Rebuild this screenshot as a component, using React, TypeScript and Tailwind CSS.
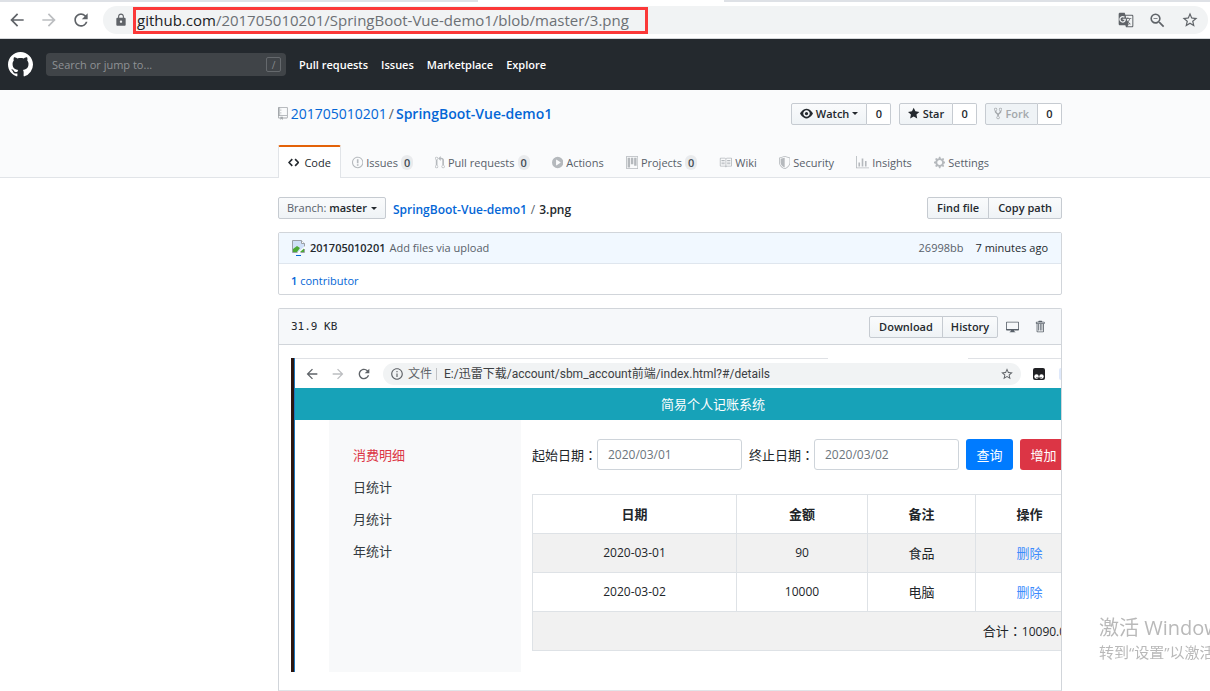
import type { ReactNode } from "react";
import {
  MdArrowBack,
  MdArrowForward,
  MdGTranslate,
  MdInfoOutline,
  MdLock,
  MdRefresh,
  MdStarBorder,
  MdZoomOut,
} from "react-icons/md";

// Octicons v1: [viewBox width, path], all 16 units high
const ICONS = {
  mark: [
    16,
    "M8 0C3.58 0 0 3.58 0 8c0 3.54 2.29 6.53 5.47 7.59.4.07.55-.17.55-.38 0-.19-.01-.82-.01-1.49-2.01.37-2.53-.49-2.69-.94-.09-.23-.48-.94-.82-1.13-.28-.15-.68-.52-.01-.53.63-.01 1.08.58 1.23.82.72 1.21 1.87.87 2.33.66.07-.52.28-.87.51-1.07-1.78-.2-3.64-.89-3.64-3.95 0-.87.31-1.59.82-2.15-.08-.2-.36-1.02.08-2.12 0 0 .67-.21 2.2.82.64-.18 1.32-.27 2-.27.68 0 1.36.09 2 .27 1.53-1.04 2.2-.82 2.2-.82.44 1.1.16 1.92.08 2.12.51.56.82 1.27.82 2.15 0 3.07-1.87 3.75-3.65 3.95.29.25.54.73.54 1.48 0 1.07-.01 1.93-.01 2.2 0 .21.15.46.55.38A8.013 8.013 0 0016 8c0-4.42-3.58-8-8-8z",
  ],
  repo: [
    12,
    "M4 9H3V8h1v1zm0-3H3v1h1V6zm0-2H3v1h1V4zm0-2H3v1h1V2zm8-1v12c0 .55-.45 1-1 1H6v2l-1.5-1.5L3 16v-2H1c-.55 0-1-.45-1-1V1c0-.55.45-1 1-1h10c.55 0 1 .45 1 1zm-1 10H1v2h2v-1h3v1h5v-2zm0-10H2v9h9V1z",
  ],
  code: [
    14,
    "M9.5 3L8 4.5 11.5 8 8 11.5 9.5 13 14 8 9.5 3zm-5 0L0 8l4.5 5L6 11.5 2.5 8 6 4.5 4.5 3z",
  ],
  issue: [
    14,
    "M7 2.3c3.14 0 5.7 2.56 5.7 5.7s-2.56 5.7-5.7 5.7A5.71 5.71 0 011.3 8c0-3.14 2.56-5.7 5.7-5.7zM7 1C3.14 1 0 4.14 0 8s3.14 7 7 7 7-3.14 7-7-3.14-7-7-7zm1 3H6v5h2V4zm0 6H6v2h2v-2z",
  ],
  pull: [
    12,
    "M11 11.28V5c-.03-.78-.34-1.47-.94-2.06C9.46 2.35 8.78 2.03 8 2H7V0L4 3l3 3V4h1c.27.02.48.11.69.31.21.2.3.42.31.69v6.28A1.993 1.993 0 0010 15a1.993 1.993 0 001-3.72zm-1 2.92c-.66 0-1.2-.55-1.2-1.2 0-.65.55-1.2 1.2-1.2.65 0 1.2.55 1.2 1.2 0 .65-.55 1.2-1.2 1.2zM4 3c0-1.11-.89-2-2-2a1.993 1.993 0 00-1 3.72v6.56A1.993 1.993 0 002 15a1.993 1.993 0 001-3.72V4.72c.59-.34 1-.98 1-1.72zm-.8 10c0 .66-.55 1.2-1.2 1.2-.65 0-1.2-.55-1.2-1.2 0-.65.55-1.2 1.2-1.2.65 0 1.2.55 1.2 1.2zM2 4.2C1.34 4.2.8 3.65.8 3c0-.65.55-1.2 1.2-1.2.65 0 1.2.55 1.2 1.2 0 .65-.55 1.2-1.2 1.2z",
  ],
  play: [
    14,
    "M14 8A7 7 0 110 8a7 7 0 0114 0zm-8.223 3.482l4.599-3.066a.5.5 0 000-.832L5.777 4.518A.5.5 0 005 4.934v6.132a.5.5 0 00.777.416z",
  ],
  project: [
    15,
    "M10 12h3V2h-3v10zm-4-2h3V2H6v8zm-4 4h3V2H2v12zm-1 1h13V1H1v14zM14 0H1a1 1 0 00-1 1v14a1 1 0 001 1h13a1 1 0 001-1V1a1 1 0 00-1-1z",
  ],
  book: [
    16,
    "M3 5h4v1H3V5zm0 3h4V7H3v1zm0 2h4V9H3v1zm11-5h-4v1h4V5zm0 2h-4v1h4V7zm0 2h-4v1h4V9zm2-6v9c0 .55-.45 1-1 1H9.5l-1 1-1-1H2c-.55 0-1-.45-1-1V3c0-.55.45-1 1-1h5.5l1 1 1-1H15c.55 0 1 .45 1 1zm-8 .5L7.5 3H2v9h6V3.5zm7-.5H9.5l-.5.5V12h6V3z",
  ],
  shield: [
    14,
    "M0 2l7-2 7 2v6.02C14 12.69 8.69 16 7 16c-1.69 0-7-3.31-7-7.98V2zm1 .75L7 1l6 1.75v5.268C13 12.104 8.449 15 7 15c-1.449 0-6-2.896-6-6.982V2.75zm1 .75L7 2v12c-1.207 0-5-2.482-5-5.985V3.5z",
  ],
  graph: [16, "M16 14v1H0V0h1v14h15zM5 13H3V8h2v5zm4 0H7V3h2v10zm4 0h-2V6h2v7z"],
  gear: [
    14,
    "M14 8.77v-1.6l-1.94-.64-.45-1.09.88-1.84-1.13-1.13-1.81.91-1.09-.45-.69-1.92h-1.6l-.63 1.94-1.11.45-1.84-.88-1.13 1.13.91 1.81-.45 1.09L0 7.23v1.59l1.94.64.45 1.09-.88 1.84 1.13 1.13 1.81-.91 1.09.45.69 1.92h1.59l.63-1.94 1.11-.45 1.84.88 1.13-1.13-.92-1.81.47-1.09L14 8.75v.02zM7 11c-1.66 0-3-1.34-3-3s1.34-3 3-3 3 1.34 3 3-1.34 3-3 3z",
  ],
  eye: [
    16,
    "M8.06 2C3 2 0 8 0 8s3 6 8.06 6C13 14 16 8 16 8s-3-6-7.94-6zM8 12c-2.2 0-4-1.78-4-4 0-2.2 1.8-4 4-4 2.22 0 4 1.8 4 4 0 2.22-1.78 4-4 4zm2-4c0 1.11-.89 2-2 2-1.11 0-2-.89-2-2 0-1.11.89-2 2-2 1.11 0 2 .89 2 2z",
  ],
  star: [14, "M14 6l-4.9-.64L7 1 4.9 5.36 0 6l3.6 3.26L2.67 14 7 11.67 11.33 14l-.93-4.74L14 6z"],
  fork: [
    10,
    "M8 1a1.993 1.993 0 00-1 3.72V6L5 8 3 6V4.72A1.993 1.993 0 002 1a1.993 1.993 0 00-1 3.72V6.5l3 3v1.78A1.993 1.993 0 005 15a1.993 1.993 0 001-3.72V9.5l3-3V4.72A1.993 1.993 0 008 1zM2 4.2C1.34 4.2.8 3.65.8 3c0-.65.55-1.2 1.2-1.2.65 0 1.2.55 1.2 1.2 0 .65-.55 1.2-1.2 1.2zm3 10c-.66 0-1.2-.55-1.2-1.2 0-.65.55-1.2 1.2-1.2.65 0 1.2.55 1.2 1.2 0 .65-.55 1.2-1.2 1.2zm3-10c-.66 0-1.2-.55-1.2-1.2 0-.65.55-1.2 1.2-1.2.65 0 1.2.55 1.2 1.2 0 .65-.55 1.2-1.2 1.2z",
  ],
  desktop: [
    16,
    "M15 2H1c-.55 0-1 .45-1 1v9c0 .55.45 1 1 1h5.34c-.25.61-.86 1.39-2.34 2h8c-1.48-.61-2.09-1.39-2.34-2H15c.55 0 1-.45 1-1V3c0-.55-.45-1-1-1zm0 9H1V3h14v8z",
  ],
  trash: [
    12,
    "M11 2H9c0-.55-.45-1-1-1H5c-.55 0-1 .45-1 1H2c-.55 0-1 .45-1 1v1c0 .55.45 1 1 1v9c0 .55.45 1 1 1h7c.55 0 1-.45 1-1V5c.55 0 1-.45 1-1V3c0-.55-.45-1-1-1zm-1 12H3V5h1v8h1V5h1v8h1V5h1v8h1V5h1v9zm1-10H2V3h9v1z",
  ],
} as const;

type IconName = keyof typeof ICONS;

function Octicon({ name, className = "h-[13px]" }: { name: IconName; className?: string }) {
  const [width, path] = ICONS[name];
  return (
    <svg
      viewBox={`0 0 ${width} 16`}
      fill="currentColor"
      fillRule="evenodd"
      aria-hidden="true"
      className={`w-auto shrink-0 ${className}`}
    >
      <path d={path} />
    </svg>
  );
}

function Caret() {
  return (
    <span className="h-0 w-0 border-x-[3px] border-t-[3px] border-x-transparent border-t-current" />
  );
}

const btn =
  "flex h-[22px] items-center border border-[#c6cbd1] bg-linear-to-b from-[#fafbfc] to-[#eff3f6] font-semibold";

function BrowserBar() {
  return (
    <div className="border-b border-[#d5d7da] bg-white">
      <div className="flex h-0.5 bg-[#dee1e6]">
        <div className="ml-[478px] w-[246px] bg-white" />
      </div>
      <div className="flex h-9 items-center pr-0.5 text-[#5f6368]">
        <div className="flex w-[103px] shrink-0 items-center gap-3 pl-[7px]">
          <button type="button" aria-label="Back">
            <MdArrowBack size={20} />
          </button>
          <button type="button" aria-label="Forward" className="text-[#bcbec1]">
            <MdArrowForward size={20} />
          </button>
          <button type="button" aria-label="Reload">
            <MdRefresh size={20} />
          </button>
        </div>
        <div className="flex h-7 min-w-0 flex-1 items-center rounded-full bg-[#f1f3f4] pl-[11px]">
          <MdLock size={14} className="shrink-0" />
          <div className="ml-[5px] flex h-[27px] w-[515px] items-center overflow-hidden border-3 border-[#fb3838] pl-px text-[15px] whitespace-nowrap text-[#6c7074]">
            <span className="text-[#202124]">github.com</span>
            <span>/201705010201/SpringBoot-Vue-demo1/blob/master/3.png</span>
          </div>
          <div className="ml-auto flex items-center gap-3.5 pr-[9px]">
            <button type="button" aria-label="Translate this page">
              <MdGTranslate size={16} />
            </button>
            <button type="button" aria-label="Zoom out">
              <MdZoomOut size={19} />
            </button>
            <button type="button" aria-label="Bookmark this page">
              <MdStarBorder size={18} />
            </button>
          </div>
        </div>
      </div>
    </div>
  );
}

function SiteHeader() {
  return (
    <header className="flex h-[51px] items-center bg-[#24292e] px-2 text-white">
      <a href="#home" aria-label="Homepage">
        <Octicon name="mark" className="h-[25px]" />
      </a>
      <div className="ml-[13px] flex h-[23px] w-60 items-center rounded-sm bg-[#404448] pr-[5px]">
        <input
          type="text"
          aria-label="Search or jump to"
          placeholder="Search or jump to..."
          className="min-w-0 flex-1 bg-transparent pl-1.5 outline-none placeholder:text-[#8f9295]"
        />
        <kbd className="flex h-[15px] w-[15px] items-center justify-center rounded-xs border border-[#65696d] font-[inherit] text-[10px] text-[#85898c]">
          /
        </kbd>
      </div>
      <nav className="ml-[13px] flex gap-[13px] font-semibold">
        {["Pull requests", "Issues", "Marketplace", "Explore"].map((label) => (
          <a key={label} href="#nav">
            {label}
          </a>
        ))}
      </nav>
    </header>
  );
}

function SocialButton({
  icon,
  label,
  caret,
  disabled,
}: {
  icon: IconName;
  label: string;
  caret?: boolean;
  disabled?: boolean;
}) {
  return (
    <li className="flex">
      <button
        type="button"
        disabled={disabled}
        className={`${btn} gap-[3px] rounded-l-xs px-2 disabled:bg-none disabled:bg-[#eff3f6] disabled:text-[#a3a7ab]`}
      >
        <Octicon name={icon} />
        {label}
        {caret && <Caret />}
      </button>
      <a
        href="#count"
        className="flex h-[22px] w-6 items-center justify-center rounded-r-xs border border-l-0 border-[#c6cbd1] bg-white font-semibold"
      >
        0
      </a>
    </li>
  );
}

const TABS: { icon: IconName; label: string; count?: number }[] = [
  { icon: "issue", label: "Issues", count: 0 },
  { icon: "pull", label: "Pull requests", count: 0 },
  { icon: "play", label: "Actions" },
  { icon: "project", label: "Projects", count: 0 },
  { icon: "book", label: "Wiki" },
  { icon: "shield", label: "Security" },
  { icon: "graph", label: "Insights" },
  { icon: "gear", label: "Settings" },
];

function RepoHead() {
  return (
    <div className="border-b border-[#e1e4e8] bg-[#fafbfc] pr-[148px] pl-[278px]">
      <div className="flex h-[55px] items-center pb-2">
        <h1 className="flex items-center text-[14px] text-[#0366d6]">
          <Octicon name="repo" className="mr-[3px] h-[13px] text-[#a3a7ab]" />
          <a href="#owner">201705010201</a>
          <span className="mx-0.5 text-[#586069]">/</span>
          <a href="#repo" className="font-semibold">
            SpringBoot-Vue-demo1
          </a>
        </h1>
        <ul className="ml-auto flex gap-2">
          <SocialButton icon="eye" label="Watch" caret />
          <SocialButton icon="star" label="Star" />
          <SocialButton icon="fork" label="Fork" disabled />
        </ul>
      </div>
      <nav className="-mb-px flex h-[33px]">
        <a
          href="#code"
          className="flex items-center gap-[5px] rounded-t-xs border-x border-t-2 border-[#e1e4e8] border-t-[#e36209] bg-white px-[9px]"
        >
          <Octicon name="code" />
          Code
        </a>
        {TABS.map((tab) => (
          <a
            key={tab.label}
            href="#tab"
            className="flex items-center gap-[3px] px-[11px] pt-0.5 text-[#586069]"
          >
            <Octicon name={tab.icon} className="h-[13px] text-[#b5b9bd]" />
            {tab.label}
            {tab.count !== undefined && (
              <span className="rounded-full bg-[#e9ebed] px-[3px] leading-[15px] font-semibold text-[#444d56]">
                {tab.count}
              </span>
            )}
          </a>
        ))}
      </nav>
    </div>
  );
}

function BrokenImage() {
  return (
    <svg viewBox="0 0 14 16" className="h-4 w-3.5 shrink-0" role="img" aria-label="avatar">
      <path d="M.5 .5h9l3 3v9H.5z" fill="#cfe0f7" stroke="#9aa0a6" />
      <path d="M9.500 .5v3h3" fill="#fff" stroke="#9aa0a6" />
      <path d="M1 12V9l4-3 3 2-3 4z" fill="#4ca934" />
      <path d="M13 6L5 13h8z" fill="#fff" />
      <path d="M12.500 9v3.500H8.500" fill="none" stroke="#9aa0a6" />
      <path d="M8 12l4-3.500v3.500z" fill="#4ca934" />
      <path d="M4 15.500h5" stroke="#0366d6" />
    </svg>
  );
}

const SIDE_LINKS = ["日统计", "月统计", "年统计"];

const RECORDS = [
  { date: "2020-03-01", amount: "90", note: "食品" },
  { date: "2020-03-02", amount: "10000", note: "电脑" },
];

// The TC face centres the full-width colon in its box
function Colon() {
  return <span className="font-['Noto_Sans_CJK_TC',sans-serif]">：</span>;
}

function DateField({ id, label, value }: { id: string; label: string; value: string }) {
  return (
    <div className="mr-[7px] flex items-center">
      <label htmlFor={id} className="w-[65px] whitespace-nowrap">
        {label}
        <Colon />
      </label>
      <input
        id={id}
        type="text"
        defaultValue={value}
        className="h-[31px] w-[145px] rounded-[3px] border border-[#ced4da] bg-white px-2.5 text-[12px] text-[#6c757d]"
      />
    </div>
  );
}

function Cell({ children }: { children: ReactNode }) {
  return <td className="border border-[#dee2e6]">{children}</td>;
}

// The committed screenshot: the bookkeeping page inside its own browser window
function Preview() {
  return (
    <div className="flex h-[314px] overflow-hidden text-[13px] text-[#212529]">
      <div className="w-1 shrink-0 border-r border-[#1b75bb] bg-[#2c1510]" />
      <div className="flex w-[836px] shrink-0 flex-col">
        <div className="flex h-px bg-[#dfe1e5]">
          <div className="ml-[533px] w-[140px] bg-white" />
        </div>
        <div className="flex h-[29px] items-center pl-[9px] text-[#5f6368]">
          <div className="flex items-center gap-2.5">
            <MdArrowBack size={16} />
            <MdArrowForward size={16} className="text-[#bcbec1]" />
            <MdRefresh size={16} />
          </div>
          <div className="ml-[11px] flex h-[22px] w-[638px] items-center rounded-full bg-[#f1f3f4] px-[7px] text-[12px] whitespace-nowrap">
            <MdInfoOutline size={14} />
            <span className="ml-1 w-7">文件</span>
            <span className="mr-[7px] h-3 border-r border-[#c0c2c5]" />
            <span className="font-[Roboto,'Noto_Sans_CJK_SC',sans-serif] text-[#3c4043]">
              E:/迅雷下载/account/sbm_account前端/index.html?#/details
            </span>
            <MdStarBorder size={14} className="ml-auto" />
          </div>
          <svg viewBox="0 0 12 12" className="ml-3 h-3 w-3 shrink-0">
            <rect width="12" height="12" rx="2" fill="#202124" />
            <circle cx="3.500" cy="8.500" r="2.200" fill="#fff" />
            <circle cx="8.500" cy="8.500" r="2.200" fill="#fff" />
            <path d="M4 9v1M8 9v1" stroke="#202124" />
          </svg>
          <div className="ml-3.5 h-3 w-3 rounded-xs bg-[#dfe9fb]" />
        </div>
        <div className="flex h-8 items-center justify-center bg-[#17a2b8] text-white">
          简易个人记账系统
        </div>
        <div className="flex flex-1 pl-[34px]">
          <nav className="flex w-48 flex-col bg-[#f8f9fa] pt-[19px] pl-6 leading-8">
            <a href="#details" className="text-[#dc3545]">
              消费明细
            </a>
            {SIDE_LINKS.map((label) => (
              <a key={label} href="#stats" className="text-[#343a40]">
                {label}
              </a>
            ))}
          </nav>
          <div className="flex-1 pt-[19px] pl-[11px]">
            <form className="flex">
              <DateField id="from" label="起始日期" value="2020/03/01" />
              <DateField id="to" label="终止日期" value="2020/03/02" />
              <button type="button" className="h-[31px] w-[47px] rounded-[3px] bg-[#007bff] text-white">
                查询
              </button>
              <button
                type="button"
                className="ml-[7px] h-[31px] w-[47px] rounded-[3px] bg-[#dc3545] text-white"
              >
                增加
              </button>
            </form>
            <table className="mt-6 w-[552px] table-fixed border-collapse border border-[#dee2e6] text-center">
              <colgroup>
                <col className="w-[204px]" />
                <col className="w-[131px]" />
                <col className="w-[108px]" />
                <col className="w-[108px]" />
              </colgroup>
              <thead>
                <tr className="h-[39px]">
                  {["日期", "金额", "备注", "操作"].map((head) => (
                    <th key={head} className="border border-[#dee2e6] font-bold">
                      {head}
                    </th>
                  ))}
                </tr>
              </thead>
              <tbody className="text-[12px]">
                {RECORDS.map((row) => (
                  <tr key={row.date} className="h-[39px] odd:bg-[#f1f1f1]">
                    <Cell>{row.date}</Cell>
                    <Cell>{row.amount}</Cell>
                    <Cell>
                      <span className="text-[13px]">{row.note}</span>
                    </Cell>
                    <Cell>
                      <a href="#delete" className="text-[13px] text-[#3d8bfd]">
                        删除
                      </a>
                    </Cell>
                  </tr>
                ))}
                <tr className="h-[39px] bg-[#f1f1f1]">
                  <td colSpan={4} className="pr-2.5 text-right">
                    <span className="text-[13px]">
                      合计
                      <Colon />
                    </span>
                    10090.00
                  </td>
                </tr>
              </tbody>
            </table>
          </div>
        </div>
      </div>
    </div>
  );
}

function FileView() {
  return (
    <main className="pr-[148px] pl-[278px]">
      <div className="flex items-center pt-[19px]">
        <button type="button" className={`${btn} gap-1 rounded-xs px-2`}>
          <span>
            <span className="font-normal text-[#586069]">Branch:</span> master
          </span>
          <Caret />
        </button>
        <div className="ml-[7px] flex gap-1 pt-[3px] text-[12px] font-semibold">
          <a href="#repo" className="text-[#0366d6]">
            SpringBoot-Vue-demo1
          </a>
          <span className="font-normal text-[#586069]">/</span>
          <span>3.png</span>
        </div>
        <div className="ml-auto flex">
          <button type="button" className={`${btn} rounded-l-xs px-[9px]`}>
            Find file
          </button>
          <button type="button" className={`${btn} -ml-px rounded-r-xs px-[9px]`}>
            Copy path
          </button>
        </div>
      </div>

      <section className="mt-[13px] rounded-xs border border-[#d1d5da]">
        <div className="flex h-[31px] items-center border-b border-[#dfe6ee] bg-[#f1f8ff] px-[13px]">
          <BrokenImage />
          <a href="#author" className="ml-1 font-semibold">
            201705010201
          </a>
          <a href="#commit" className="ml-1 text-[#586069]">
            Add files via upload
          </a>
          <a href="#sha" className="ml-auto text-[#586069]">
            26998bb
          </a>
          <span className="ml-3">7 minutes ago</span>
        </div>
        <div className="flex h-[30px] items-center px-3 pt-[3px] text-[#0366d6]">
          <a href="#contributors">
            <strong className="font-semibold">1</strong> contributor
          </a>
        </div>
      </section>

      <section className="mt-[13px] rounded-t-xs border border-[#d1d5da] border-b-[#e1e4e8]">
        <div className="flex h-9 items-center border-b border-[#d1d5da] bg-[#f6f8fa] px-3">
          <span className="font-['DejaVu_Sans_Mono',monospace] text-[11px]">31.9 KB</span>
          <div className="ml-auto flex">
            <a href="#raw" className={`${btn} rounded-l-xs px-[9px]`}>
              Download
            </a>
            <a href="#history" className={`${btn} -ml-px rounded-r-xs px-2`}>
              History
            </a>
          </div>
          <a href="#desktop" aria-label="Open in desktop" className="ml-2 text-[#586069]">
            <Octicon name="desktop" />
          </a>
          <button type="button" aria-label="Delete file" className="mr-1 ml-4 text-[#586069]">
            <Octicon name="trash" />
          </button>
        </div>
        <div className="pt-[13px] pb-[18px] pl-3">
          <Preview />
        </div>
      </section>
    </main>
  );
}

export default function App() {
  return (
    <div className="overflow-hidden bg-white font-['Open_Sans','Noto_Sans_CJK_SC',sans-serif] text-[11px] leading-4 text-[#24292e]">
      <BrowserBar />
      <SiteHeader />
      <RepoHead />
      <FileView />
      <div className="pointer-events-none fixed right-0 bottom-[29px] w-[111px] overflow-hidden whitespace-nowrap text-[#b9b9b9]">
        <p className="text-[20px] leading-7">激活 Windows</p>
        <p className="text-[15px] leading-5">转到“设置”以激活 Windows。</p>
      </div>
    </div>
  );
}
